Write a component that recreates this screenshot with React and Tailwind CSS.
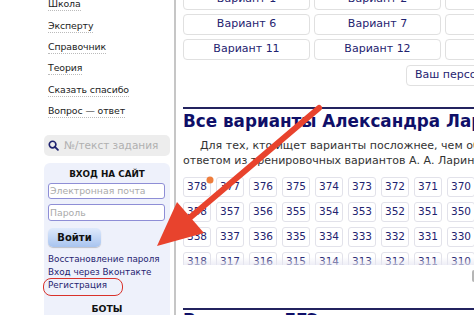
import React from "react";

const menu = ["Школа", "Эксперту", "Справочник", "Теория", "Сказать спасибо", "Вопрос — ответ"];
const variantRows = [
  [1, 2, 3, 4, 5],
  [6, 7, 8, 9, 10],
  [11, 12, 13, 14, 15],
];

function numRow(start) {
  const out = [];
  for (let i = 0; i < 20; i++) out.push(start - i);
  return out;
}
const numRows = [numRow(378), numRow(358), numRow(338), numRow(318)];

export default function App() {
  return (
    <div className="relative w-[474px] h-[315px] overflow-hidden bg-white font-['DejaVu_Sans','Verdana',sans-serif]">
      <div className="flex h-full">
        {/* Sidebar */}
        <aside className="w-[176px] shrink-0 border-r-2 border-[#c6c6c6] pl-[44px] pr-[4px]">
          <nav className="-mt-[6px] flex flex-col pl-[4px]">
            {menu.map((m) => (
              <div key={m} className="h-[21.4px] flex items-center">
                <span className="text-[9.4px] leading-[12px] tracking-[-0.1px] text-[#222] border-b border-dotted border-[#bbb]">{m}</span>
              </div>
            ))}
          </nav>
          <div className="mt-[13px] h-[21px] rounded-[5px] bg-[#ededed] flex items-center pl-[4px] gap-[5px]">
            <svg width="11" height="11" viewBox="0 0 12 12" fill="none">
              <circle cx="5" cy="5" r="3.6" stroke="#1f2370" strokeWidth="1.8" />
              <path d="M7.6 7.6 L10.8 10.8" stroke="#1f2370" strokeWidth="2" strokeLinecap="round" />
            </svg>
            <span className="text-[10.5px] text-[#b0b0b0] whitespace-nowrap">№/текст задания</span>
          </div>
          <div className="mt-[7px] rounded-t-[6px] bg-[#eef1fb] px-[4px] pt-[5px] h-[200px]">
            <div className="text-center text-[8.8px] leading-[12px] font-bold text-[#111]">ВХОД НА САЙТ</div>
            <div className="mt-[3px] h-[16px] w-[117px] rounded-[3px] border border-[#8e8ed6] bg-white flex items-center pl-[1px] text-[9.3px] text-[#aaa] whitespace-nowrap">Электронная почта</div>
            <div className="mt-[5px] h-[17px] w-[117px] rounded-[3px] border border-[#8e8ed6] bg-white flex items-center pl-[1px] text-[9.3px] text-[#aaa]">Пароль</div>
            <div className="mt-[7px] h-[19px] w-[53px] rounded-[5px] bg-gradient-to-b from-[#dfeafc] to-[#a8c4ef] shadow-[0_1px_1px_rgba(0,0,0,0.2)] flex items-center justify-center text-[10px] font-bold text-[#111]">Войти</div>
            <div className="mt-[6px] flex flex-col text-[8.8px] leading-[13px] text-[#1f2370]">
              <span className="whitespace-nowrap">Восстановление пароля</span>
              <span className="whitespace-nowrap">Вход через Вконтакте</span>
              <span className="relative self-start whitespace-nowrap">
                Регистрация
                <span className="absolute -left-[5px] w-[80px] -top-[1px] -bottom-[4px] rounded-[8px] border-[1.5px] border-[#d9322b]"></span>
              </span>
            </div>
            <div className="mt-[11px] text-center text-[9.3px] leading-[12px] font-bold text-[#111]">БОТЫ</div>
          </div>
        </aside>

        {/* Main */}
        <main className="flex-1 min-w-0 overflow-hidden pl-[7px]">
          <div className="w-[700px]">
            <div className="-mt-[11px] grid grid-cols-[repeat(5,127px)] gap-[4px]">
              {variantRows.flat().map((n) => (
                <div key={n} className="h-[21px] rounded-[4px] border border-[#e0e0e0] bg-white flex items-center justify-center text-[11px] text-[#1f2370]">
                  Вариант {n}
                </div>
              ))}
            </div>
            <div className="mt-[5px] ml-[223px] h-[21px] w-[220px] rounded-[4px] border border-[#e0e0e0] flex items-center pl-[8px] text-[11px] text-[#1f2370] whitespace-nowrap">
              Ваш персональный вариант
            </div>
            <div className="mt-[21px] h-[2px] bg-[#23235f]"></div>
            <h1 className="mt-[2px] text-[16.8px] leading-[21px] font-bold text-[#0f0f68] whitespace-nowrap">
              Все варианты Александра Ларина
            </h1>
            <p className="mt-[6px] text-[11px] leading-[15px] text-[#333] whitespace-nowrap">
              <span className="pl-[17px]">Для тех, кто ищет варианты посложнее, чем обычные, предлагаем задания с кратким</span>
              <br />
              ответом из тренировочных вариантов А. А. Ларина.
            </p>
            <div className="relative mt-[9px] h-[88px] overflow-hidden">
              <div className="flex flex-col gap-[5px]">
                {numRows.map((row, ri) => (
                  <div key={ri} className="flex gap-[5px]">
                    {row.map((n) => (
                      <div key={n} className="h-[20px] w-[28px] shrink-0 rounded-[3px] border border-[#e2e2ea] bg-white flex items-center justify-center text-[10.5px] text-[#1f2370]">
                        {n}
                      </div>
                    ))}
                  </div>
                ))}
              </div>
              <div className="absolute left-0 right-0 bottom-0 h-[8px] bg-gradient-to-b from-[rgba(255,255,255,0)] to-[rgba(230,230,242,0.7)]"></div>
            </div>
            <div className="mt-[5px] ml-[289px] h-[12px] w-[80px] rounded-[2px] border-l-[3px] border-[#b5b5b5] bg-[#f4f4f4]"></div>
            <div className="mt-[26px] h-[2px] bg-[#23235f]"></div>
            <h2 className="mt-[0px] text-[16.8px] leading-[21px] font-bold text-[#0f0f68] whitespace-nowrap">
              Варианты ЕГЭ прошлых лет
            </h2>
          </div>
        </main>
      </div>

      {/* annotation overlay */}
      <svg className="absolute inset-0 pointer-events-none" width="474" height="315" viewBox="0 0 474 315">
        <line x1="319" y1="108" x2="186" y2="221" stroke="#e8432d" strokeWidth="6" strokeLinecap="round" />
        <polygon points="157,246 177,202 204,233" fill="#e8432d" />
        <circle cx="210" cy="180" r="3.5" fill="#ee7d3c" />
      </svg>
    </div>
  );
}
